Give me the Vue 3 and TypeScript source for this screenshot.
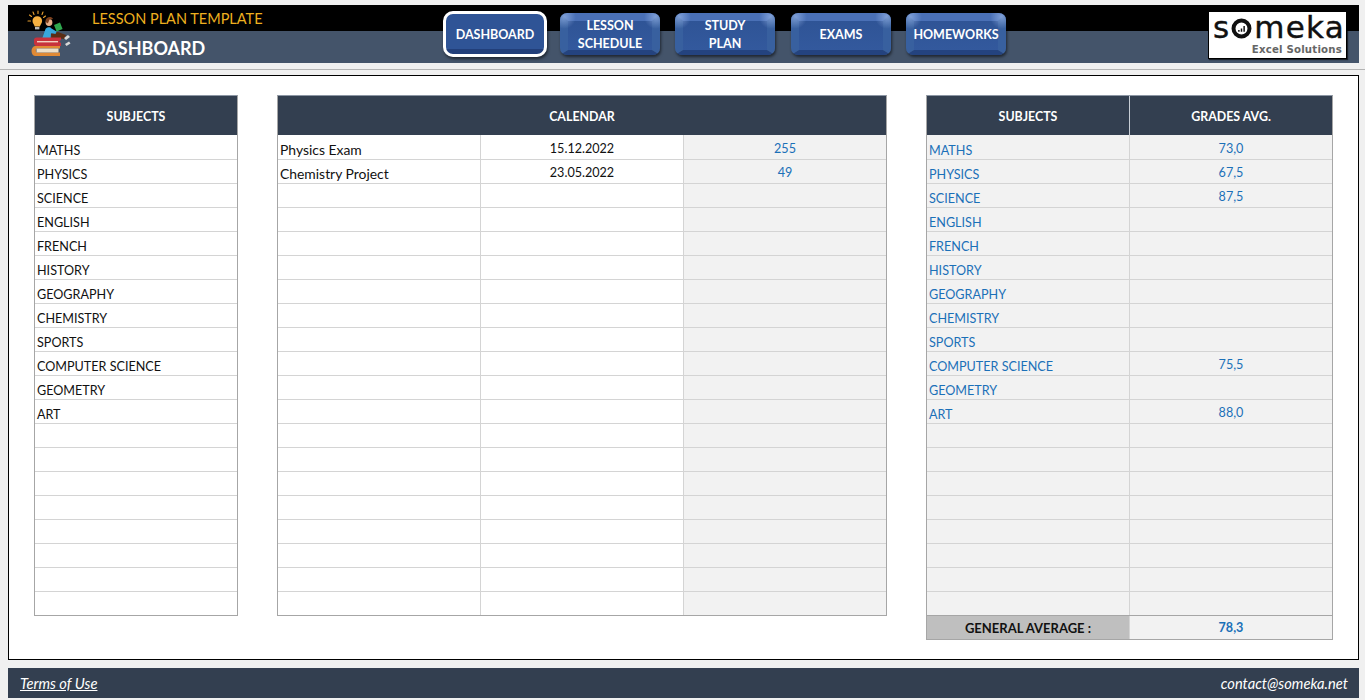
<script setup lang="ts">
const subjects = ['MATHS','PHYSICS','SCIENCE','ENGLISH','FRENCH','HISTORY','GEOGRAPHY','CHEMISTRY','SPORTS','COMPUTER SCIENCE','GEOMETRY','ART']
const grades = ['73,0','67,5','87,5','','','','','','','75,5','','88,0']
const events = [
  { name: 'Physics Exam', date: '15.12.2022', days: '255' },
  { name: 'Chemistry Project', date: '23.05.2022', days: '49' },
]
const ROWS = 20
const rows = Array.from({ length: ROWS }, (_, i) => i)
const nav = [
  { lines: ['DASHBOARD'], active: true },
  { lines: ['LESSON', 'SCHEDULE'], active: false },
  { lines: ['STUDY', 'PLAN'], active: false },
  { lines: ['EXAMS'], active: false },
  { lines: ['HOMEWORKS'], active: false },
]
</script>

<template>
  <div class="page">
    <header class="header">
      <svg class="mascot" viewBox="0 0 60 55" width="60" height="55">
        <g stroke="#e8a030" stroke-width="1.1" stroke-linecap="round">
          <path d="M8 14H10.5M9.5 8L11.5 9.5M13 5L14 7.5M18 4V6.5M23 5L22 7.5M25.5 9L23.5 10.5" />
        </g>
        <path d="M12.5 14a4.8 4.8 0 1 1 9.6 0c0 2.4-1.6 3.2-2.2 5.6h-5.2c-.6-2.4-2.2-3.2-2.2-5.6z" fill="#f5b041" />
        <rect x="15" y="20" width="4.4" height="2.4" fill="#b8b8b8" />
        <path d="M34 18l6-2.5 2.6 6.5-6 2.6z" fill="#2fa84f" />
        <path d="M31 27l7-2 8 3-1.5 4-8-1-5 3z" fill="#5a2d14" />
        <path d="M22 32l3.5-10c1-2 5-2.5 6-.5l5 3-1 2.4-4.4-1-.6 5.6z" fill="#38a8dc" />
        <circle cx="29" cy="15.5" r="3.4" fill="#e8b08a" />
        <path d="M25.5 14c.2-4 6-5.400 7.500-2l-3.500.5-1.200 3-1.300 1z" fill="#7b3f1d" />
        <path d="M44 31l4-3 2 2-4 3zM45 37l4-2.500 1.500 2-4 2.500z" fill="#d8d8d8" />
        <path d="M14 33c0-1.500 1-2.500 2.500-2.500H41v2.500l-2 1.500 2 1.500V39H16.500C15 39 14 37.500 14 36z" fill="#c8323c" />
        <rect x="17" y="34" width="21" height="1.400" fill="#f1d0c0" />
        <path d="M11.500 44c0-3 1.800-5 4-5H40v2.500H17c-1.500 0-1.500 4 0 4h23V49H15.500c-2.200 0-4-2-4-5z" fill="#e08a35" />
        <rect x="16.500" y="41.500" width="22" height="4" fill="#eee0c8" />
      </svg>
      <div class="titles">
        <div class="app-name">LESSON PLAN TEMPLATE</div>
        <div class="page-name">DASHBOARD</div>
      </div>
      <nav class="nav">
        <button v-for="b in nav" :key="b.lines[0]" class="nav-btn" :class="{ active: b.active }">
          <span v-for="l in b.lines" :key="l">{{ l }}</span>
        </button>
      </nav>
      <div class="logo">
        <div class="logo-word">s<span class="logo-o"><svg viewBox="0 0 20 20" width="21" height="21"><circle cx="10" cy="10" r="7.600" fill="none" stroke="#111" stroke-width="3.800" /><path d="M7.500 13v-1.500M10 13v-3M12.500 13V7.500" stroke="#111" stroke-width="1.400" /></svg></span>meka</div>
        <div class="logo-sub">Excel Solutions</div>
      </div>
    </header>
    <div class="rule"></div>
    <main class="panel">
      <section class="table subjects">
        <div class="head cell-head">SUBJECTS</div>
        <div v-for="i in rows" :key="i" class="row"><div class="cell name caps">{{ subjects[i] }}</div></div>
      </section>
      <section class="table calendar">
        <div class="head cell-head">CALENDAR</div>
        <div v-for="i in rows" :key="i" class="row">
          <div class="cell name lower">{{ events[i]?.name }}</div>
          <div class="cell center raised">{{ events[i]?.date }}</div>
          <div class="cell center raised blue shade">{{ events[i]?.days }}</div>
        </div>
      </section>
      <section class="table grades">
        <div class="head-row">
          <div class="cell-head">SUBJECTS</div>
          <div class="cell-head">GRADES AVG.</div>
        </div>
        <div v-for="i in rows" :key="i" class="row">
          <div class="cell name caps blue shade">{{ subjects[i] }}</div>
          <div class="cell center raised blue shade">{{ grades[i] }}</div>
        </div>
        <div class="row total">
          <div class="cell center label">GENERAL AVERAGE :</div>
          <div class="cell center blue shade strong">78,3</div>
        </div>
      </section>
    </main>
    <footer class="footer">
      <a class="foot-link">Terms of Use</a>
      <span class="foot-mail">contact@someka.net</span>
    </footer>
  </div>
</template>

<style>
html, body { margin: 0; background: #f0f0f0; }
</style>

<style scoped>
.page {
  width: 1365px;
  height: 700px;
  box-sizing: border-box;
  padding: 5px 6px 0 8px;
  background: #f0f0f0;
  font-family: Lato, "Open Sans", sans-serif;
  font-size: 12.6px;
  color: #111;
  overflow: hidden;
}
.header {
  height: 58px;
  display: flex;
  align-items: center;
  background: linear-gradient(#000 26px, #44546a 26px);
}
.mascot { margin-left: 12px; flex: none; }
.titles {
  margin-left: 12px;
  width: 351px;
  height: 58px;
  display: flex;
  flex-direction: column;
}
.app-name { height: 26px; line-height: 27px; color: #eeb01f; font-size: 14.5px; }
.page-name { line-height: 34px; color: #fff; font-size: 18px; font-weight: 700; }
.nav { display: flex; align-items: center; gap: 15px; width: 765px; }
.nav-btn {
  position: relative;
  box-sizing: border-box;
  width: 100px;
  height: 42px;
  padding: 0 0 2px;
  border-style: solid;
  border-width: 8px 8px 5px;
  border-color: #4a70b6 #38609f #24437f;
  border-radius: 7px;
  display: flex;
  flex-direction: column;
  align-items: center;
  justify-content: center;
  color: #fff;
  font: 700 12.5px/18px Lato, sans-serif;
  background: linear-gradient(#2f5496, #33599d);
  box-shadow: 1px 2px 3px rgba(0, 0, 0, .55);
}
.nav-btn::after {
  content: "";
  position: absolute;
  inset: -8px -8px -5px;
  border-radius: 7px;
  pointer-events: none;
  background:
    radial-gradient(circle at 4px 4px, rgba(150, 180, 230, .7), transparent 12px),
    radial-gradient(circle at calc(100% - 4px) 4px, rgba(150, 180, 230, .7), transparent 12px);
}
.nav-btn:nth-child(4) { margin-left: 1px; }
.nav-btn.active {
  width: 104px;
  height: 46px;
  margin-right: -2px;
  padding: 2px 0 0;
  border: 3px solid #fff;
  border-radius: 10px;
  background: linear-gradient(#2f5496 0 calc(100% - 5px), #223f7a calc(100% - 5px));
}
.nav-btn.active::after { display: none; }
.logo {
  box-sizing: border-box;
  width: 139px;
  height: 48px;
  margin-top: 1px;
  background: #fff;
  border: 1px solid #000;
  padding: 0 4px;
  display: flex;
  flex-direction: column;
  box-shadow: 1px 1px 1px rgba(0,0,0,.6);
}
.logo-word {
  font: 400 31px/30px "DejaVu Sans", sans-serif;
  color: #111;
  letter-spacing: 1.2px;
  -webkit-text-stroke: .4px #111;
  display: flex;
  align-items: center;
  height: 31px;
}
.logo-o { display: inline-flex; margin: 3px 2px 0 1px; }
.logo-sub {
  text-align: right;
  font: 700 10.2px/13px "DejaVu Sans", sans-serif;
  color: #666;
  letter-spacing: .2px;
}
.rule { height: 1px; margin: 6px -6px 5px -8px; background: #b4b4b4; }
.panel {
  box-sizing: border-box;
  width: 1351px;
  height: 585px;
  background: #fff;
  border: 1px solid #000;
  padding: 19px 25px 0;
  display: flex;
  align-items: flex-start;
  gap: 39px;
}
.table { flex: none; box-sizing: border-box; border: 1px solid #a6a6a6; border-top-color: #8c96a4; }
.subjects { width: 204px; }
.calendar { width: 610px; }
.grades { width: 407px; }
.head-row { display: flex; }
.head-row .cell-head { flex: 1 1 0; }
.head-row .cell-head:first-child { flex: 0 0 202px; }
.head-row .cell-head + .cell-head { border-left: 1px solid #c8ced6; }
.cell-head {
  height: 39px;
  background: #333f50;
  color: #fff;
  font-weight: 700;
  font-size: 12.4px;
  line-height: 41px;
  text-align: center;
}
.row { display: flex; height: 24px; box-sizing: border-box; border-top: 1px solid #d4d4d4; }
.head + .row, .head-row + .row { border-top: 0; }
.head + .row .cell, .head-row + .row .cell { padding-top: 1px; }
.cell {
  flex: 1 1 0;
  min-width: 0;
  box-sizing: border-box;
  height: 100%;
  line-height: 28px;
  white-space: nowrap;
  border-left: 1px solid #d4d4d4;
}
.cell:first-child { border-left: 0; flex: 0 0 202px; }
.subjects .cell:first-child { flex: 1 1 0; }
.name { padding-left: 2px; }
.caps { line-height: 30px; }
.lower { font-size: 13.9px; }
.center { text-align: center; }
.raised { line-height: 25px; }
.blue { color: #1b70b8; }
.shade { background: #f2f2f2; }
.total { border-top: 1px solid #a6a6a6; }
.total .cell { line-height: 24px; font-weight: 700; }
.total .label { background: #bfbfbf; color: #111; border-left: 0; font-size: 13px; }
.strong { font-weight: 700; }
.footer {
  height: 30px;
  margin-top: 8px;
  width: 1351px;
  box-sizing: border-box;
  padding: 0 11px 1px 12px;
  display: flex;
  align-items: center;
  justify-content: space-between;
  background: #333f50;
  color: #fff;
  font-style: italic;
  font-size: 14.7px;
}
.foot-link { text-decoration: underline; }
</style>
